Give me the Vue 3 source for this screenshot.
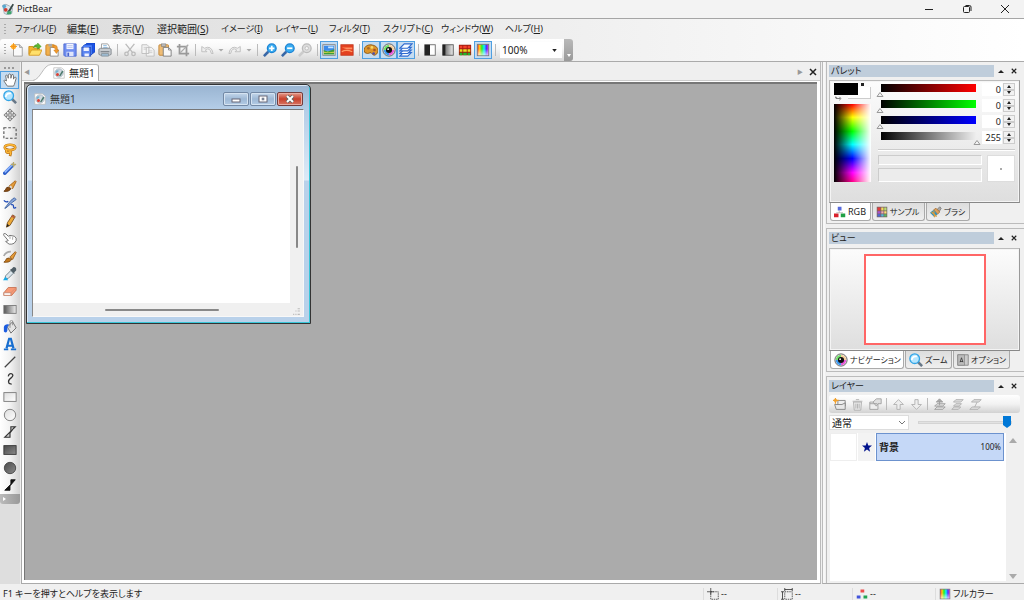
<script setup>
import { ref } from 'vue'

const menus = [
  { text: 'ファイル', key: 'F', kana: true },
  { text: '編集', key: 'E' },
  { text: '表示', key: 'V' },
  { text: '選択範囲', key: 'S' },
  { text: 'イメージ', key: 'I', kana: true },
  { text: 'レイヤー', key: 'L', kana: true },
  { text: 'フィルタ', key: 'T', kana: true },
  { text: 'スクリプト', key: 'C', kana: true },
  { text: 'ウィンドウ', key: 'W', kana: true },
  { text: 'ヘルプ', key: 'H', kana: true }
]

const groups = [
  { size: 'g6', items: ['new', 'open', 'import', 'save', 'saveall', 'print'] },
  { size: 'g4', items: ['cut', 'copy', 'paste', 'crop'] },
  { size: 'undo', items: ['undo', 'drop', 'redo', 'drop'] },
  { size: 'g3', items: ['zoomin', 'zoomout', 'zoomoff'] },
  { size: 'g2', items: ['picture', 'redpic'], on: ['picture'] },
  { size: 'g3', items: ['palette', 'eye', 'layers'], on: ['palette', 'eye', 'layers'] },
  { size: 'g4', items: ['mono', 'gray', 'indexed', 'full'], on: ['full'] }
]

const tools = [
  'hand', 'lens', 'move', 'marquee', 'lasso', 'wand', 'brush', 'airbrush',
  'pencil', 'finger', 'smudge', 'dropper', 'eraser', 'gradient', 'bucket', 'text',
  'line', 'curve', 'rect', 'ellipse', 'poly', 'frect', 'fellipse', 'fpoly'
]
const tool = ref('hand')

const channels = ref([
  { name: 'red', value: 0 },
  { name: 'green', value: 0 },
  { name: 'blue', value: 0 },
  { name: 'alpha', value: 255 }
])

const layerTools = [
  ['addlayer', 'trash', 'props'],
  ['up', 'down'],
  ['merge1', 'merge2', 'merge3']
]
</script>

<template>
  <div class="app">
    <svg class="sheet" width="0" height="0" aria-hidden="true">
      <defs>
        <linearGradient id="steel" x1="0" y1="0" x2="1" y2="1"><stop offset="0" stop-color="#4a4a4a" /><stop offset="1" stop-color="#8a8a8a" /></linearGradient>
        <linearGradient id="pale" x1="0" y1="0" x2="1" y2="1"><stop offset="0" stop-color="#ddd" /><stop offset="1" stop-color="#fff" /></linearGradient>
        <linearGradient id="fade" x1="0" y1="0" x2="1" y2="0"><stop offset="0" stop-color="#555" /><stop offset="1" stop-color="#eee" /></linearGradient>
        <linearGradient id="rainbow" x1="0" y1="0" x2="1" y2="0"><stop offset="0" stop-color="#f22" /><stop offset=".2" stop-color="#fc1" /><stop offset=".4" stop-color="#2e2" /><stop offset=".6" stop-color="#1ef" /><stop offset=".8" stop-color="#43f" /><stop offset="1" stop-color="#f2e" /></linearGradient>
        <linearGradient id="shine" x1="0" y1="0" x2="0" y2="1"><stop offset=".4" stop-color="#fff" stop-opacity="0" /><stop offset="1" stop-color="#fff" stop-opacity=".7" /></linearGradient>
      </defs>
      <symbol id="bear" viewBox="0 0 16 16"><path d="M1 3q4-3 9 1l4 3-1 7q-6 3-10 0z" fill="#dfe5ea" stroke="#8fa0ad" /><path d="M0 4q3-4 6 0L3 9z" fill="#5ba8cf" /><circle cx="5" cy="9" r="2.500" fill="#d43c31" /><path d="M6 13l3-4 5-8 2 1-5 9z" fill="#3a4a48" /><path d="M6 15h6l1-4H8z" fill="#3da56a" /></symbol>
      <symbol id="doc" viewBox="0 0 16 16"><path d="M1 1h10l4 3v11H1z" fill="#fff" stroke="#bbb" /><circle cx="8" cy="8" r="5.500" fill="#cfd9e1" stroke="#9ba9b6" /><path d="M3 7q1-4 5-2L5 8z" fill="#76b2d2" /><circle cx="6" cy="10" r="2" fill="#db4035" /><path d="M8 12l4-7 2 1-4 6z" fill="#4c7a6c" /></symbol>
      <symbol id="new" viewBox="0 0 16 16"><path d="M4 2h7l3 3v10H4z" fill="#fafafa" stroke="#999" /><path d="M11 2v3h3" fill="#ddd" stroke="#999" /><circle cx="4" cy="4" r="3" fill="#ffb02c" /><path d="M4 0v8M0 4h8" stroke="#f2951d" /></symbol>
      <symbol id="open" viewBox="0 0 16 16"><path d="M1 13V4h5l1 2h6v7z" fill="#f2b42b" stroke="#c88a1c" /><path d="M1 14l3-6h12l-3 6z" fill="#ffe06b" stroke="#d59a24" /><path d="M6 5q2-4 5-3V0l4 4-4 3V5q-3-1-5 0z" fill="#5cb82f" stroke="#3b8e1b" stroke-width=".6" /></symbol>
      <symbol id="import" viewBox="0 0 16 16"><rect x="1" y="2" width="10" height="12" rx="1" fill="#f2b04c" stroke="#c57f22" /><rect x="4" y="1" width="4" height="3" fill="#aaa" /><path d="M6 5h6l3 3v7H6z" fill="#fff" stroke="#888" /><path d="M9 3q6-2 5 5h2l-3 4-3-4h2q0-3-3-3z" fill="#f49b2c" stroke="#c27418" stroke-width=".5" /></symbol>
      <symbol id="save" viewBox="0 0 16 16"><path d="M1 1h14v14H2l-1-1z" fill="#6f8ef0" stroke="#4c68cf" /><rect x="4" y="1" width="8" height="6" fill="#f3f5ff" /><path d="M5 3h6M5 5h6" stroke="#b6c1e9" /><rect x="4" y="10" width="8" height="5" fill="#dfe5fb" /><path d="M6 11v4" stroke="#4965cc" stroke-width="2" /></symbol>
      <symbol id="saveall" viewBox="0 0 16 16"><path d="M4 3l3-3h9v10l-4 3z" fill="#1952ed" stroke="#1441b9" /><path d="M2 4l2-2h9v10l-2 2z" fill="#4f83ff" stroke="#1c4bc7" /><rect x="1" y="5" width="10" height="10" fill="#5d86f0" stroke="#2b50bb" /><path d="M3 5h6v4H3zM4 12h5v3H4z" fill="#eef2ff" /></symbol>
      <symbol id="print" viewBox="0 0 16 16"><path d="M4 7V1h7l2 3v3z" fill="#fff" stroke="#999" /><path d="M6 3h4M6 5h5" stroke="#7db4df" /><path d="M1 7l2-1h10l2 1v6l-2 1H3l-2-1z" fill="#c6cbd0" stroke="#80868c" /><path d="M3 10h10" stroke="#61676d" /><path d="M4 12h8v3H4z" fill="#9cbad1" stroke="#8c979f" /></symbol>
      <symbol id="cut" viewBox="0 0 16 16"><g fill="none" stroke="#bbb" stroke-width="1.500"><path d="M3 1l8 10M13 1L5 11" /><circle cx="4" cy="12.500" r="2" /><circle cx="12" cy="12.500" r="2" /></g></symbol>
      <symbol id="copy" viewBox="0 0 16 16"><path d="M1 2h6l2 2v8H1zM6 5h6l3 3v7H6z" fill="#f4f4f4" stroke="#bbb" /><path d="M3 5h3M3 7h3M8 9h5M8 11h5" stroke="#ccc" /></symbol>
      <symbol id="paste" viewBox="0 0 16 16"><rect x="1" y="2" width="11" height="12" rx="1" fill="#efbd76" stroke="#c08334" /><rect x="4" y="1" width="5" height="3" fill="#bbb" stroke="#777" stroke-width=".6" /><path d="M6 5h6l3 3v7H6z" fill="#f8f8f8" stroke="#777" /><path d="M12 5v3h3" fill="none" stroke="#888" /></symbol>
      <symbol id="crop" viewBox="0 0 16 16"><path d="M4 1v11h11M1 4h11v11" fill="none" stroke="#999" stroke-width="2" /><path d="M5 11l9-9" stroke="#aaa" stroke-width="1.500" /></symbol>
      <symbol id="undo" viewBox="0 0 16 16"><path d="M2 4v6h6L6 8q5-4 7 4h2Q13 2 5 6z" fill="#eee" stroke="#bbb" /></symbol>
      <symbol id="redo" viewBox="0 0 16 16"><path d="M14 4v6H8l2-2q-5-4-7 4H1Q3 2 11 6z" fill="#eee" stroke="#bbb" /></symbol>
      <symbol id="drop" viewBox="0 0 16 16"><path d="M3 6h10l-5 5z" fill="#aaa" /></symbol>
      <symbol id="zoomin" viewBox="0 0 16 16"><path d="M1 15l5-5" stroke="#3867a6" stroke-width="3" /><circle cx="10" cy="6" r="5" fill="#3aadf0" stroke="#1b83d5" stroke-width="1.500" /><path d="M10 3v6M7 6h6" stroke="#fff" stroke-width="2" /></symbol>
      <symbol id="zoomout" viewBox="0 0 16 16"><path d="M1 15l5-5" stroke="#3867a6" stroke-width="3" /><circle cx="10" cy="6" r="5" fill="#3aadf0" stroke="#1b83d5" stroke-width="1.500" /><path d="M7 6h6" stroke="#fff" stroke-width="2" /></symbol>
      <symbol id="zoomoff" viewBox="0 0 16 16"><path d="M1 15l5-5" stroke="#ccc" stroke-width="3" /><circle cx="10" cy="6" r="5" fill="#ddd" stroke="#bbb" stroke-width="1.500" /><circle cx="10" cy="6" r="2" fill="#f5f5f5" stroke="#bbb" /></symbol>
      <symbol id="picture" viewBox="0 0 16 16"><rect x="1" y="2" width="14" height="12" fill="#fff" stroke="#777" /><path d="M2 3h12v6H2z" fill="#3b8bea" /><path d="M7 4h6v2H7z" fill="#c5e6ff" /><path d="M2 8q3 2 6 1l6-2v6H2z" fill="#3f9c35" /><path d="M2 10q5 1 12 0v1H2z" fill="#f4db51" /></symbol>
      <symbol id="redpic" viewBox="0 0 16 16"><rect x="1" y="2" width="14" height="12" fill="#e4411f" stroke="#c33a22" /><path d="M2 5h12v2H8z" fill="#ff8f60" /><path d="M2 10q5-3 12 0" fill="none" stroke="#ff9a66" stroke-width="1.500" /></symbol>
      <symbol id="palette" viewBox="0 0 16 16"><path d="M0 8Q1 2 8 2q8 1 8 7-1 5-5 5l-3-3-4 1Q0 12 0 8z" fill="#dd952a" stroke="#8a5a18" /><circle cx="5" cy="6" r="1.500" fill="#a8682a" /><circle cx="9" cy="5" r="1.500" fill="#f6d96b" /><circle cx="12" cy="8" r="1.500" fill="#a8502a" /><circle cx="11" cy="12" r="1.500" fill="#4a4ab0" /></symbol>
      <symbol id="eye" viewBox="0 0 16 16"><circle cx="8" cy="8" r="7" fill="#eee" stroke="#555" /><path d="M8 2a6 6 0 0 1 6 6H8z" fill="#f7cf9c" /><path d="M14 8a6 6 0 0 1-6 6V8z" fill="#e95bd9" /><path d="M8 14a6 6 0 0 1-6-6h6z" fill="#3f9af0" /><path d="M2 8a6 6 0 0 1 6-6v6z" fill="#72e26b" /><circle cx="8" cy="8" r="3.500" fill="#111" /><circle cx="7" cy="7" r="1" fill="#fff" /></symbol>
      <symbol id="layers" viewBox="0 0 16 16"><g fill="#f6fbff" stroke="#2f6bd0" stroke-width="1.300"><path d="M1 15l4-4h9l-4 4z" /><path d="M1 12l4-4h9l-4 4z" /><path d="M1 9l4-4h9l-4 4z" /><path d="M1 6l5-5h9l-5 5z" /></g></symbol>
      <symbol id="mono" viewBox="0 0 16 16"><rect x="2" y="2" width="12" height="12" fill="#fff" stroke="#666" /><path d="M2 2h6v12H2z" fill="#222" /></symbol>
      <symbol id="gray" viewBox="0 0 16 16"><rect x="2" y="2" width="12" height="12" fill="url(#fade)" stroke="#555" /><path d="M2 2h3v12H2z" fill="#222" /></symbol>
      <symbol id="indexed" viewBox="0 0 16 16"><path d="M1 2h14v12H1z" fill="#a01c10" /><path d="M2 3h3v3H2zM6 3h4v3H6zM11 3h3v3h-3z" fill="#f5402c" /><path d="M2 7h3v3H2zM6 7h4v3H6zM11 7h3v3h-3z" fill="#e6e020" /><path d="M2 11h3v3H2zM6 11h4v3H6zM11 11h3v3h-3z" fill="#22b62a" /></symbol>
      <symbol id="full" viewBox="0 0 16 16"><rect x="1.500" y="1.500" width="13" height="13" fill="url(#rainbow)" stroke="#777" /><path d="M2 2h12v12H2z" fill="url(#shine)" /></symbol>
      <symbol id="hand" viewBox="0 0 16 16"><path d="M5 15l-4-6q0-2 3 0L3 3q2-2 3 3V2q2-2 3 0v4l1-4q2-1 2 1v4l1-2q2-1 2 1l-2 7-1 2z" fill="#fff" stroke="#666" /></symbol>
      <symbol id="lens" viewBox="0 0 16 16"><path d="M10 10l5 5" stroke="#687888" stroke-width="3" /><circle cx="6.500" cy="6.500" r="5.500" fill="#b5e6ff" stroke="#31a4e6" stroke-width="1.500" /><path d="M3 8q1-5 6-4" fill="none" stroke="#fff" stroke-width="2" /></symbol>
      <symbol id="move" viewBox="0 0 16 16"><path d="M8 1l3 3H9v3h3V5l3 3-3 3V9H9v3h2l-3 3-3-3h2V9H4v2L1 8l3-3v2h3V4H5z" fill="#ccc" stroke="#777" /></symbol>
      <symbol id="marquee" viewBox="0 0 16 16"><rect x="1" y="2" width="14" height="12" fill="none" stroke="#555" stroke-width="1.300" stroke-dasharray="3 2" /></symbol>
      <symbol id="lasso" viewBox="0 0 16 16"><g fill="none" stroke="#b97317" stroke-width="3"><ellipse cx="8" cy="5" rx="6" ry="3" /><path d="M4 8q-1 3 2 3 3-2 3 0l-1 4" /></g><g fill="none" stroke="#ffba38" stroke-width="1.500"><ellipse cx="8" cy="5" rx="6" ry="3" /><path d="M4 8q-1 3 2 3 3-2 3 0l-1 3" /></g></symbol>
      <symbol id="wand" viewBox="0 0 16 16"><path d="M2 14l9-9" stroke="#2e5fc9" stroke-width="4" stroke-linecap="round" /><path d="M2 13l9-9" stroke="#8eb6ff" stroke-width="2" /><path d="M12 1v6M9 4h6" stroke="#b7a96b" stroke-width="1.500" /></symbol>
      <symbol id="brush" viewBox="0 0 16 16"><path d="M7 8l7-6 1 1-4 8z" fill="#e49b38" stroke="#a3641c" /><path d="M1 14q2-1 3-4 2-2 5 1-2 4-8 3z" fill="#8b4c12" stroke="#60350b" /><path d="M8 8l2 2" stroke="#ddd" stroke-width="2" /></symbol>
      <symbol id="airbrush" viewBox="0 0 16 16"><path d="M2 14l7-9 4-3 2 2-4 3-8 7z" fill="#8aa6d8" stroke="#3b60a0" /><path d="M1 5q3 3 5 1M9 10q3-1 3 2t3 1" fill="none" stroke="#234eb9" stroke-width="1.500" /></symbol>
      <symbol id="pencil" viewBox="0 0 16 16"><path d="M4 15l1-5 6-9 3 2-6 10z" fill="#eeaa39" stroke="#79501e" /><path d="M4 15l1-4 2 2z" fill="#222" /><path d="M10 2l3 2" stroke="#b75d46" stroke-width="2" /></symbol>
      <symbol id="finger" viewBox="0 0 16 16"><path d="M1 3q2-1 5 3l2-1 5 1q3 2 2 5-2 4-5 4H7l-4-3 3-1-5-6q-1-1 0-2z" fill="#fff" stroke="#666" /><path d="M8 6v3M11 7v3" stroke="#999" /></symbol>
      <symbol id="smudge" viewBox="0 0 16 16"><path d="M8 9l6-6 1 1-4 8z" fill="#e49b38" stroke="#995c18" /><path d="M1 15q2-1 3-4 3-2 6 1-3 4-9 3z" fill="#c57a1e" stroke="#7a470f" /><path d="M1 8q2-5 8-5" fill="none" stroke="#aaa" stroke-width="2" /></symbol>
      <symbol id="dropper" viewBox="0 0 16 16"><path d="M2 14l1-4 6-6 3 3-6 6z" fill="#dbe4ea" stroke="#6b7b84" /><path d="M8 3l2-1 2-2q4 0 3 4l-2 2v2z" fill="#4f5d65" /><path d="M0 15h6l-3-4z" fill="#13aae9" /></symbol>
      <symbol id="eraser" viewBox="0 0 16 16"><path d="M1 10l5-6h9v3l-5 6H1z" fill="#f89a76" stroke="#c77455" /><path d="M1 10h8l6-6M9 10v3" fill="none" stroke="#d68c70" /><path d="M1 10h8v3H1z" fill="#fff" stroke="#c98a74" /></symbol>
      <symbol id="gradient" viewBox="0 0 16 16"><rect x="1" y="4" width="14" height="9" fill="url(#fade)" stroke="#777" /></symbol>
      <symbol id="bucket" viewBox="0 0 16 16"><path d="M5 8l6-6 4 7-6 6z" fill="#e4e4e4" stroke="#666" /><path d="M8 9V2q2-4 3 0v4" fill="none" stroke="#888" /><path d="M1 13V8q1-4 6-3l-2 3v4q-1 4-4 1z" fill="#1d5de0" /></symbol>
      <symbol id="text" viewBox="0 0 16 16"><path d="M4 13L7 2h2l3 11M5 10h6" fill="none" stroke="#176ed0" stroke-width="2.500" /><path d="M1 14h5M9 14h6" stroke="#176ed0" stroke-width="2" /></symbol>
      <symbol id="line" viewBox="0 0 16 16"><path d="M2 14L14 2" stroke="#444" stroke-width="1.500" /></symbol>
      <symbol id="curve" viewBox="0 0 16 16"><path d="M6 5q1-4 4-3 3 2-1 5-4 3-2 6l3 1" fill="none" stroke="#333" stroke-width="1.500" /></symbol>
      <symbol id="rect" viewBox="0 0 16 16"><rect x="1" y="3" width="14" height="10" fill="url(#pale)" stroke="#777" /></symbol>
      <symbol id="ellipse" viewBox="0 0 16 16"><circle cx="8" cy="8" r="6.500" fill="url(#pale)" stroke="#777" /></symbol>
      <symbol id="poly" viewBox="0 0 16 16"><path d="M2 14h6V9l4-5 2-2H9v5l-4 4z" fill="#ccc" stroke="#333" stroke-width="1.300" /></symbol>
      <symbol id="frect" viewBox="0 0 16 16"><rect x="1" y="3" width="14" height="10" fill="url(#steel)" stroke="#333" /></symbol>
      <symbol id="fellipse" viewBox="0 0 16 16"><circle cx="8" cy="8" r="6.500" fill="url(#steel)" stroke="#444" /></symbol>
      <symbol id="fpoly" viewBox="0 0 16 16"><path d="M2 14h6V9l6-7H9v5z" fill="#111" stroke="#111" /></symbol>
      <symbol id="rgb" viewBox="0 0 16 16"><path d="M5 1h5v5H5z" fill="#5669dd" /><path d="M0 10h6v5H0z" fill="#d9222d" /><path d="M9 10h6v5H9z" fill="#20a044" /><path d="M7 6v3H3M7 9h5" fill="none" stroke="#aaa" /></symbol>
      <symbol id="dots" viewBox="0 0 16 16"><path d="M6 2h5v4H6z" fill="#ed4d4d" /><path d="M1 10h5v4H1z" fill="#4254db" /><path d="M10 10h5v4h-5z" fill="#21a352" /></symbol>
      <symbol id="samples" viewBox="0 0 16 16"><path d="M1 1h14v14H1z" fill="#766" /><path d="M2 2h4v4H2z" fill="#e53b3b" /><path d="M7 2h3v4H7z" fill="#f8d95b" /><path d="M11 2h3v4h-3z" fill="#b8e070" /><path d="M2 7h4v3H2z" fill="#ad51cf" /><path d="M7 7h3v3H7z" fill="#f1a9b4" /><path d="M11 7h3v3h-3z" fill="#ffe071" /><path d="M2 11h4v3H2z" fill="#4b67dc" /><path d="M7 11h3v3H7z" fill="#52b9dd" /><path d="M11 11h3v3h-3z" fill="#56bc5a" /></symbol>
      <symbol id="paint" viewBox="0 0 16 16"><path d="M9 5l4-4 2 2-3 5z" fill="#a8a8a8" stroke="#777" /><path d="M5 5l3-2 5 5-3 3z" fill="#dca05d" stroke="#a36a2b" /><path d="M0 9l5-4 5 6-4 4z" fill="#2e91bd" /><path d="M2 8l7 6M5 6l1 9" stroke="#e49c35" stroke-width="1.500" /></symbol>
      <symbol id="options" viewBox="0 0 16 16"><path d="M1 1h14v14H1z" fill="#ccc" stroke="#777" /><path d="M1 1h9v14H1z" fill="#bbb" stroke="#888" /><path d="M4 11l2-6 2 6M4 10h4" fill="none" stroke="#333" /></symbol>
      <symbol id="addlayer" viewBox="0 0 16 16"><path d="M6 3h9v7H6z" fill="#eee" stroke="#777" /><path d="M2 8h9l4-2v8H4z" fill="#e8e8e8" stroke="#777" /><circle cx="3" cy="3" r="2" fill="#f7a82e" /><path d="M3 0v7M0 3h7" stroke="#f0a02e" stroke-width="1.500" /></symbol>
      <symbol id="trash" viewBox="0 0 16 16"><path d="M3 5h10l-1 10H4zM2 4h12M6 2h4M6 7v6M8 7v6M10 7v6" fill="#e8e8e8" stroke="#aaa" /></symbol>
      <symbol id="props" viewBox="0 0 16 16"><path d="M1 5h10v9H1z" fill="#eee" stroke="#999" /><path d="M1 7h9M5 5l4-4h6v6h-4l-2 3z" fill="#e0e0e0" stroke="#999" /></symbol>
      <symbol id="up" viewBox="0 0 16 16"><path d="M8 2l6 6h-4v6H6V8H2z" fill="#eee" stroke="#aaa" /></symbol>
      <symbol id="down" viewBox="0 0 16 16"><path d="M8 14l6-6h-4V2H6v6H2z" fill="#eee" stroke="#aaa" /></symbol>
      <symbol id="merge1" viewBox="0 0 16 16"><path d="M2 10l3-3h10l-3 3zM2 14l3-3h10l-3 3z" fill="#ddd" stroke="#999" /><path d="M8 1l4 4H4zM8 4v5" fill="#aaa" stroke="#999" /></symbol>
      <symbol id="merge2" viewBox="0 0 16 16"><path d="M3 5l3-3h9l-3 3zM3 10l3-3h7l-3 3zM1 14l3-3h8l-3 3z" fill="#ddd" stroke="#aaa" /></symbol>
      <symbol id="merge3" viewBox="0 0 16 16"><path d="M3 5l3-3h9l-3 3zM1 14l3-3h10l-3 3zM10 5l-3 6" fill="#ddd" stroke="#aaa" /></symbol>
      <symbol id="origin" viewBox="0 0 16 16"><path d="M5 0v9M0 5h9" stroke="#333" /><path d="M5 5h10v10H5z" fill="none" stroke="#333" stroke-dasharray="2 1" /></symbol>
      <symbol id="extent" viewBox="0 0 16 16"><path d="M5 5h10v10H5z" fill="none" stroke="#333" stroke-dasharray="2 1" /><path d="M5 2h10M5 0v4M15 0v4M2 5v10M0 5h4M0 15h4" stroke="#222" /></symbol>
    </svg>

    <header class="titlebar">
      <svg class="ico small"><use href="#bear" /></svg>
      <h1>PictBear</h1>
      <div class="winbtns">
        <button aria-label="最小化"><svg viewBox="0 0 10 10"><path d="M1 5.500h8" /></svg></button>
        <button aria-label="元に戻す"><svg viewBox="0 0 10 10"><rect x="1.500" y="2.500" width="6" height="6" rx="1" /><path d="M3.500 1.500h4q1.500 0 1.500 1.500v4" /></svg></button>
        <button aria-label="閉じる"><svg viewBox="0 0 10 10"><path d="M1 1l8 8M9 1l-8 8" /></svg></button>
      </div>
    </header>

    <nav class="menubar">
      <i class="grip"></i>
      <button v-for="m in menus" :key="m.key" :class="{ kana: m.kana }">{{ m.text }}(<u>{{ m.key }}</u>)</button>
    </nav>

    <div class="toolrow">
      <div class="toolbar">
        <i class="grip tall"></i>
        <template v-for="(g, gi) in groups" :key="gi">
          <div class="group" :class="g.size">
            <button
              v-for="(name, i) in g.items"
              :key="i"
              :class="{ on: g.on && g.on.includes(name), dd: name === 'drop' }"
              :aria-label="name"
            >
              <svg class="ico"><use :href="'#' + name" /></svg>
            </button>
          </div>
          <i class="sep" :class="{ wide: gi < 3 }"></i>
        </template>
        <select class="zoom" aria-label="表示倍率"><option>100%</option></select>
        <button class="more" aria-label="その他"><i></i></button>
      </div>
    </div>

    <div class="main">
      <aside class="tools">
        <i class="dotrow"></i>
        <div class="toollist">
          <button
            v-for="t in tools"
            :key="t"
            :class="{ on: tool === t }"
            :aria-label="t"
            @click="tool = t"
          >
            <svg class="ico"><use :href="'#' + t" /></svg>
          </button>
        </div>
        <button class="more flat" aria-label="その他のツール"><i></i></button>
      </aside>

      <section class="docs">
        <div class="tabstrip">
          <button class="arrow" aria-label="前へ">◀</button>
          <div class="doctab">
            <svg class="slope" viewBox="0 0 18 17"><path d="M0 17C8 15 10 1 18 0.500V17z" fill="#fff" /><path d="M0 16.500C8 15 10 1 18 0.500" fill="none" stroke="#bbb" /></svg>
            <button class="tabname"><svg class="ico small"><use href="#doc" /></svg>無題1</button>
          </div>
          <button class="arrow next" aria-label="次へ">▶</button>
          <button class="x" aria-label="閉じる"><svg viewBox="0 0 8 8"><path d="M1 1l6 6M7 1l-6 6" /></svg></button>
        </div>
        <div class="desk">
          <article class="child">
            <header>
              <svg class="ico small"><use href="#doc" /></svg>
              <h2>無題1</h2>
              <button aria-label="最小化"><svg viewBox="0 0 12 10"><rect x="2" y="5" width="8" height="3" fill="#fff" stroke="#667" /></svg></button>
              <button aria-label="最大化"><svg viewBox="0 0 12 10"><rect x="2" y="2" width="8" height="6" fill="#fff" stroke="#667" /><rect x="5" y="4" width="2" height="2" fill="#89a" stroke="#667" stroke-width=".5" /></svg></button>
              <button class="close" aria-label="閉じる"><svg viewBox="0 0 12 10"><path d="M3 2l6 6M9 2l-6 6" stroke="#566" stroke-width="3.500" /><path d="M3 2l6 6M9 2l-6 6" stroke="#fff" stroke-width="2" /></svg></button>
            </header>
            <div class="client">
              <div class="paper"></div>
              <div class="vbar"><i></i></div>
              <div class="hbar"><i></i></div>
              <svg class="sizer" viewBox="0 0 8 8"><path d="M5 1h2v1H5zM3 3h1v1H3zM5 3h2v1H5zM1 6h1v1H1zM3 6h1v1H3zM5 6h2v1H5z" fill="#bbb" /></svg>
            </div>
          </article>
        </div>
      </section>

      <aside class="dock">
        <section class="panel">
          <header><h3>パレット</h3><button aria-label="折りたたむ"><i class="tri"></i></button><button class="x" aria-label="閉じる"><svg viewBox="0 0 8 8"><path d="M1 1l6 6M7 1l-6 6" /></svg></button></header>
          <div class="body colors">
            <div class="left">
              <div class="swatches"><b></b><i></i><em></em><svg viewBox="0 0 8 6"><path d="M1 1v2h5M5 1l2 2-2 2M0 2l1-1 1 1" /></svg></div>
              <div class="spectrum"></div>
            </div>
            <div class="right">
              <div v-for="c in channels" :key="c.name" class="channel">
                <input v-model="c.value" type="range" min="0" max="255" :class="c.name" :aria-label="c.name">
                <input v-model="c.value" type="text" :aria-label="c.name + ' value'">
                <span class="spin"><button aria-label="増やす"><i></i></button><button aria-label="減らす"><i></i></button></span>
              </div>
              <hr>
              <div class="preview">
                <div class="bars"><i></i><i></i></div>
                <div class="tip"></div>
              </div>
            </div>
          </div>
          <div class="tabs">
            <button class="active t1"><svg class="ico small"><use href="#rgb" /></svg>RGB</button>
            <button class="t2"><svg class="ico small"><use href="#samples" /></svg>サンプル</button>
            <button class="t3"><svg class="ico small"><use href="#paint" /></svg>ブラシ</button>
          </div>
        </section>

        <section class="panel view">
          <header><h3>ビュー</h3><button aria-label="折りたたむ"><i class="tri"></i></button><button class="x" aria-label="閉じる"><svg viewBox="0 0 8 8"><path d="M1 1l6 6M7 1l-6 6" /></svg></button></header>
          <div class="body navi"><div class="frame"></div></div>
          <div class="tabs">
            <button class="active t4"><svg class="ico"><use href="#eye" /></svg>ナビゲーション</button>
            <button class="t5"><svg class="ico"><use href="#lens" /></svg>ズーム</button>
            <button class="t6"><svg class="ico small"><use href="#options" /></svg>オプション</button>
          </div>
        </section>

        <section class="panel layer">
          <header><h3>レイヤー</h3><button aria-label="折りたたむ"><i class="tri"></i></button><button class="x" aria-label="閉じる"><svg viewBox="0 0 8 8"><path d="M1 1l6 6M7 1l-6 6" /></svg></button></header>
          <div class="layertools">
            <template v-for="(set, si) in layerTools" :key="si">
              <i v-if="si" class="sep"></i>
              <button v-for="n in set" :key="n" :aria-label="n"><svg class="ico"><use :href="'#' + n" /></svg></button>
            </template>
          </div>
          <div class="blend">
            <span class="mode"><select aria-label="合成モード"><option>通常</option></select><svg viewBox="0 0 8 6"><path d="M1 1l3 3 3-3" /></svg></span>
            <input type="range" min="0" max="100" value="100" aria-label="不透明度">
          </div>
          <div class="list">
            <div class="rows">
              <div class="row"><span class="thumb"></span><span class="star"><svg viewBox="0 0 10 10"><path d="M5 0l1.300 3.600H10L7.100 5.900 8.100 9.700 5 7.500 1.900 9.700 2.900 5.900 0 3.600h3.700z" fill="#00128c" /></svg></span><button class="name"><b>背景</b><span>100%</span></button></div>
            </div>
            <div class="scroll"><i class="tri"></i><i class="tri dn"></i></div>
          </div>
        </section>
      </aside>
    </div>

    <footer class="status">
      <span class="msg">F1 キーを押すとヘルプを表示します</span>
      <span><svg class="ico small"><use href="#origin" /></svg>--</span>
      <span><svg class="ico small"><use href="#extent" /></svg>--</span>
      <span><svg class="ico small"><use href="#dots" /></svg>--</span>
      <span><svg class="ico small"><use href="#full" /></svg>フルカラー</span>
    </footer>
  </div>
</template>

<style>
html, body { height: 100%; overflow: hidden; }
</style>

<style scoped>
* { box-sizing: border-box; }
.app { height: 100vh; display: flex; flex-direction: column; background: #f0f0f0; color: #222; font: 10px/12px "Noto Sans", "Noto Sans CJK JP", sans-serif; font-feature-settings: "palt"; }
.sheet { position: absolute; }
button, input, select { font: inherit; font-feature-settings: inherit; color: inherit; margin: 0; padding: 0; border: 0; background: none; border-radius: 0; outline: 0; }
button { display: flex; align-items: center; justify-content: center; white-space: nowrap; }
h1, h2, h3 { margin: 0; font-size: 9px; font-weight: 400; }
i { display: block; }
.ico { width: 14px; height: 14px; flex: none; display: block; }
.ico.small { width: 12px; height: 12px; }

.titlebar { flex: none; height: 19px; display: flex; align-items: center; gap: 3px; padding: 0 0 1px 2px; background: #f3f3f3; border-bottom: 1px solid #a5a5a5; }
.winbtns { margin-left: auto; display: flex; }
.winbtns button { width: 38px; height: 16px; }
.winbtns svg { width: 10px; height: 10px; fill: none; stroke: #222; }

.menubar { flex: none; height: 20px; display: flex; align-items: center; padding-left: 4px; background: linear-gradient(90deg, #dcdcdc, #fff); }
.grip { width: 2px; height: 10px; background: repeating-linear-gradient(#aaa 0 1px, transparent 1px 3px); }
.grip.tall { height: 12px; }
.menubar .grip { margin-right: 9px; }
.menubar button { justify-content: flex-start; width: 54px; }
.menubar .kana { font-size: 9px; }
.menubar button:nth-of-type(1) { width: 52px; }
.menubar button:nth-of-type(2), .menubar button:nth-of-type(3) { width: 45px; }
.menubar button:nth-of-type(4), .menubar button:nth-of-type(9) { width: 64px; }
.menubar button:nth-of-type(8) { width: 58px; }

.toolrow { flex: none; height: 23px; background: linear-gradient(90deg, #dcdcdc, #fff); border-bottom: 1px solid #aaa; }
.toolbar { width: 573px; height: 22px; display: flex; align-items: center; padding-left: 4px; border-radius: 3px; background: linear-gradient(#fff, #f8f8f8 40%, #d6d6d6); }
.toolbar .grip { margin-right: 2px; }
.group { display: flex; }
.group button { flex: 1 1 0; height: 18px; border: 1px solid transparent; min-width: 0; }
.group button.on, .toollist button.on { background: #c5dcf1; border-color: #4f9fe0; }
.g6 { width: 106px; }
.g4 { width: 71px; }
.g3 { width: 53px; }
.g2 { width: 36px; }
.undo { width: 55px; }
.group button.dd { flex: none; width: 11px; }
.dd .ico { width: 8px; height: 8px; }
.sep { flex: none; width: 6px; height: 12px; background: linear-gradient(#bbb, #bbb) center / 1px 100% no-repeat; }
.sep.wide { width: 7px; }
.zoom { flex: 1; height: 16px; margin-left: 2px; padding: 0 20px 0 2px; appearance: none; background: #fff url("data:image/svg+xml,%3Csvg xmlns='http://www.w3.org/2000/svg' viewBox='0 0 6 4'%3E%3Cpath d='M0 0h6L3 4z' fill='%23222'/%3E%3C/svg%3E") right 5px center / 5px 3px no-repeat; }
.more { flex: none; width: 9px; height: 22px; margin-left: 2px; align-items: flex-end; padding-bottom: 4px; background: linear-gradient(#b9b9b9, #999); border-radius: 0 3px 3px 0; }
.more i { border: 2px solid transparent; border-top: 3px solid #fff; border-bottom: 0; }

.main { flex: 1; min-height: 0; display: grid; grid-template-columns: 21px 1fr 203px; }
.tools { display: flex; flex-direction: column; background: #dedede; border-right: 1px solid #eee; }
.dotrow { height: 2px; width: 12px; margin: 5px 0 2px 4px; background: repeating-linear-gradient(90deg, #999 0 2px, transparent 2px 4px); }
.toollist { height: 423px; display: flex; flex-direction: column; background: linear-gradient(90deg, #fff, #f2f2f2 50%, #d2d2d2); }
.toollist button { flex: 1 1 0; min-height: 0; width: 19px; border: 1px solid transparent; }
.more.flat { width: 20px; height: 10px; margin: 0; padding: 0 0 0 3px; align-items: center; justify-content: flex-start; border-radius: 0 0 3px 3px; background: linear-gradient(90deg, #bbb, #999); }
.more.flat i { border: 2px solid transparent; border-left: 3px solid #fff; border-right: 0; }

.docs { min-width: 0; display: flex; flex-direction: column; background: #fff; border-left: 1px solid #aaa; border-right: 1px solid #bbb; border-bottom: 1px solid #aaa; }
.tabstrip { flex: none; height: 19px; display: flex; align-items: flex-end; background: #efefef; border-bottom: 1px solid #ccc; }
.arrow { width: 10px; height: 17px; font-size: 6px; color: #999; }
.arrow.next { margin-left: auto; }
.x svg { width: 8px; height: 8px; fill: none; stroke: #222; stroke-width: 1.5; }
.tabstrip .x { width: 14px; height: 17px; }
.tabstrip .arrow.next { margin-right: 1px; }
.doctab { display: flex; height: 17px; margin: 0 0 -1px 1px; }
.slope { width: 18px; height: 17px; display: block; }
.tabname { background: #fff; border-top: 1px solid #bbb; border-right: 1px solid #aaa; border-radius: 0 3px 0 0; padding: 0 3px 0 2px; gap: 4px; }
.desk { flex: 1; position: relative; margin: 1px 3px 3px 2px; background: #ababab; border: 1px solid #777; border-width: 2px 0 0 1px; }
.child { position: absolute; left: 1px; top: 0; width: 285px; height: 240px; border: 1px solid #333; border-radius: 5px 5px 0 0; padding: 0 6px 6px 5px; display: flex; flex-direction: column; background: linear-gradient(#99b4d1, #b4cde7 24px, #dceaf7 95px, #b9d1ea 96px); box-shadow: inset -1px -1px #38c6d8, inset 1px 1px #dbe8f5; }
.child header { flex: none; height: 24px; display: flex; align-items: center; padding: 4px 1px 0 2px; }
.child h2 { margin: 0 auto 0 4px; font-size: 10px; color: #333; }
.child header button { width: 26px; height: 14px; margin-left: 1px; border: 1px solid #7389a5; border-radius: 2px; background: linear-gradient(#c4d7eb, #9db8d5 50%, #b4cce5); box-shadow: inset 0 0 0 1px #d5e3f1; }
.child header button.close { border-color: #753c3c; background: linear-gradient(#e59b8c, #c8402c 50%, #d77765); box-shadow: inset 0 0 0 1px #e9aba0; }
.child header svg:not(.ico) { width: 12px; height: 10px; }
.client { flex: 1; display: grid; grid-template: 1fr 13px / 1fr 13px; border: 1px solid #f8f8f8; border-top: 1px solid #777; border-left: 1px solid #888; background: #f0f0f0; }
.paper { background: #fff; }
.vbar, .hbar { display: flex; align-items: center; justify-content: center; }
.vbar i { width: 2px; height: 82px; background: #888; border-radius: 1px; }
.hbar i { width: 114px; height: 2px; background: #888; border-radius: 1px; }
.sizer { width: 9px; height: 9px; align-self: end; justify-self: center; }

.dock { display: flex; flex-direction: column; padding-left: 3px; border-left: 1px solid #bbb; margin-left: 1px; border-bottom: 1px solid #aaa; box-shadow: inset 2px 0 #f7f7f7; }
.panel { padding: 3px 4px 0 2px; height: 162px; border-left: 1px solid #bbb; border-bottom: 1px solid #bbb; flex: none; }
.panel.view { height: 144px; }
.view, .layer { margin-top: 4px; border-top: 1px solid #bbb; }
.panel.layer { flex: 1; min-height: 0; display: flex; flex-direction: column; border-bottom: 0; }
.panel header { display: flex; flex: none; height: 12px; margin-bottom: 3px; }
.panel.view header { margin-bottom: 4px; }
.panel h3 { flex: 1; background: #bfcddb; padding-left: 2px; color: #222; }
.panel header button { width: 13px; height: 12px; }
.panel header .x svg { width: 6px; height: 6px; }
.tri { border: 3px solid transparent; border-top: 0; border-bottom-color: #222; border-bottom-width: 3px; }
.body { border: 1px solid #bbb; border-right-color: #999; border-bottom-color: #888; background: linear-gradient(#fcfcfc, #dedede); box-shadow: inset 0 0 0 1px #f4f4f4; }
.colors { height: 123px; display: flex; gap: 5px; padding: 2px 4px; }
.left { width: 37px; }
.swatches { position: relative; height: 18px; margin-bottom: 3px; }
.swatches b { position: absolute; z-index: 1; left: 0; top: 0; width: 24px; height: 12px; background: #000; }
.swatches i { position: absolute; right: 0; bottom: 2px; width: 23px; height: 12px; background: #fff; border: 1px solid #ccc; border-width: 0 1px 1px 0; }
.swatches em { position: absolute; right: 7px; top: 0; width: 3px; height: 3px; background: #222; }
.swatches svg { position: absolute; left: 1px; bottom: 0; width: 7px; height: 5px; fill: none; stroke: #666; }
.spectrum { height: 78px; background: linear-gradient(90deg, #000, transparent 50%, #fff), linear-gradient(red, #ff0 17%, lime 35%, cyan 52%, blue 70%, #f0f 88%, #f08); }
.right { flex: 1; min-width: 0; }
.channel { display: flex; height: 16px; }
.channel input[type="range"] { flex: 1; min-width: 0; height: 16px; appearance: none; }
.channel input::-webkit-slider-runnable-track { height: 8px; margin-bottom: 6px; background: var(--ramp) center / calc(100% - 10px) 100% no-repeat; }
.channel input::-webkit-slider-thumb { appearance: none; width: 8px; height: 5px; margin-top: 8px; background: url("data:image/svg+xml,%3Csvg xmlns='http://www.w3.org/2000/svg' viewBox='0 0 8 5'%3E%3Cpath d='M1 4.500L4 .5 7 4.500z' fill='%23f4f4f4' stroke='%23999'/%3E%3C/svg%3E"); }
.red { --ramp: linear-gradient(90deg, #000, red); }
.green { --ramp: linear-gradient(90deg, #000, #0f0); }
.blue { --ramp: linear-gradient(90deg, #000, #00f); }
.alpha { --ramp: linear-gradient(90deg, #000, #eee); }
.channel input[type="text"] { width: 20px; height: 13px; margin-left: 1px; padding-right: 1px; text-align: right; background: #fff; font-size: 9px; }
.spin { display: flex; flex-direction: column; width: 12px; height: 13px; margin-left: 1px; }
.spin button { flex: 1; border: 1px solid #ccc; background: #f2f2f2; }
.spin i { border: 2px solid transparent; border-bottom: 3px solid #222; border-top: 0; }
.spin button + button i { border-top: 3px solid #222; border-bottom: 0; }
hr { margin: 2px 0 4px 2px; border: 0; height: 2px; background: #ccc; border-bottom: 1px solid #fff; }
.preview { display: flex; gap: 5px; padding-left: 2px; }
.bars { flex: 1; display: grid; grid-template-rows: 10px 14px; gap: 3px; }
.bars i { border: 1px solid #ccc; border-right-color: #fff; border-bottom-color: #fff; background: #ececec; }
.tip { width: 28px; background: #fff radial-gradient(#aaa 0 1px, transparent 1px) center / 2px 2px no-repeat; border: 1px solid #ddd; }
.tabs { display: flex; gap: 1px; padding-left: 1px; font-size: 8px; }
.tabs button { height: 18px; gap: 2px; padding: 0 2px 0 3px; justify-content: flex-start; border: 1px solid #aaa; border-top: 0; border-radius: 0 0 3px 3px; background: linear-gradient(#ddd, #efefef); }
.tabs button.active { background: #fff; }
.tabs .t1 { width: 41px; font-size: 9px; }
.t2 { width: 53px; } .t3 { width: 44px; }
.t4 { width: 74px; } .t5 { width: 47px; } .t6 { width: 57px; }
.navi { height: 103px; display: flex; align-items: center; justify-content: center; }
.frame { width: 122px; height: 91px; background: #fff; border: 2px solid #f66; }

.layertools { flex: none; display: flex; align-items: center; height: 18px; padding-left: 1px; border-radius: 3px; background: linear-gradient(#fff, #f2f2f2 50%, #d2d2d2); }
.layertools button { width: 18px; height: 16px; }
.layertools .sep { width: 5px; }
.layertools .ico { width: 13px; height: 13px; }
.blend { flex: none; display: flex; align-items: center; gap: 9px; margin-top: 2px; padding-right: 8px; }
.mode { position: relative; width: 80px; }
.mode select { display: block; width: 100%; height: 15px; padding: 0 2px; appearance: none; background: #fff; border: 1px solid #ddd; }
.mode svg { position: absolute; right: 3px; top: 5px; width: 8px; height: 6px; fill: none; stroke: #777; pointer-events: none; }
.blend input { flex: 1; min-width: 0; height: 14px; appearance: none; }
.blend input::-webkit-slider-runnable-track { height: 3px; background: #e2e2e2; border: 1px solid #d4d4d4; }
.blend input::-webkit-slider-thumb { appearance: none; width: 8px; height: 12px; margin-top: -6px; background: #0078d7; clip-path: polygon(0 0, 100% 0, 100% 75%, 50% 100%, 0 75%); }
.list { flex: 1; min-height: 0; display: flex; margin: 3px 0 2px 1px; }
.rows { flex: 1; background: #fff; }
.row { display: flex; height: 28px; padding-right: 2px; gap: 1px; }
.thumb { width: 27px; border: 1px solid #eee; }
.star { width: 17px; background: #f3f3f3; display: flex; align-items: center; justify-content: center; }
.star svg { width: 10px; height: 10px; }
.name { flex: 1; justify-content: space-between; padding: 0 2px; background: #c5d8f7; border: 1px solid #6c92ce; }
.name span { font-size: 8px; }
.scroll { width: 14px; display: flex; flex-direction: column; align-items: center; justify-content: space-between; padding: 5px 0 2px; }
.scroll .tri { border: 4px solid transparent; border-top: 0; border-bottom: 5px solid #aaa; }
.scroll .tri.dn { border-bottom: 0; border-top: 5px solid #aaa; }

.status { flex: none; height: 16px; display: grid; grid-template-columns: 1fr 74px 75px 83px 89px; background: #f0f0f0; padding-top: 4px; font-size: 9px; }
.status span { display: flex; align-items: center; gap: 2px; padding-left: 3px; border-left: 1px solid #ddd; white-space: nowrap; }
.status .msg { padding-left: 3px; border: 0; }
</style>
